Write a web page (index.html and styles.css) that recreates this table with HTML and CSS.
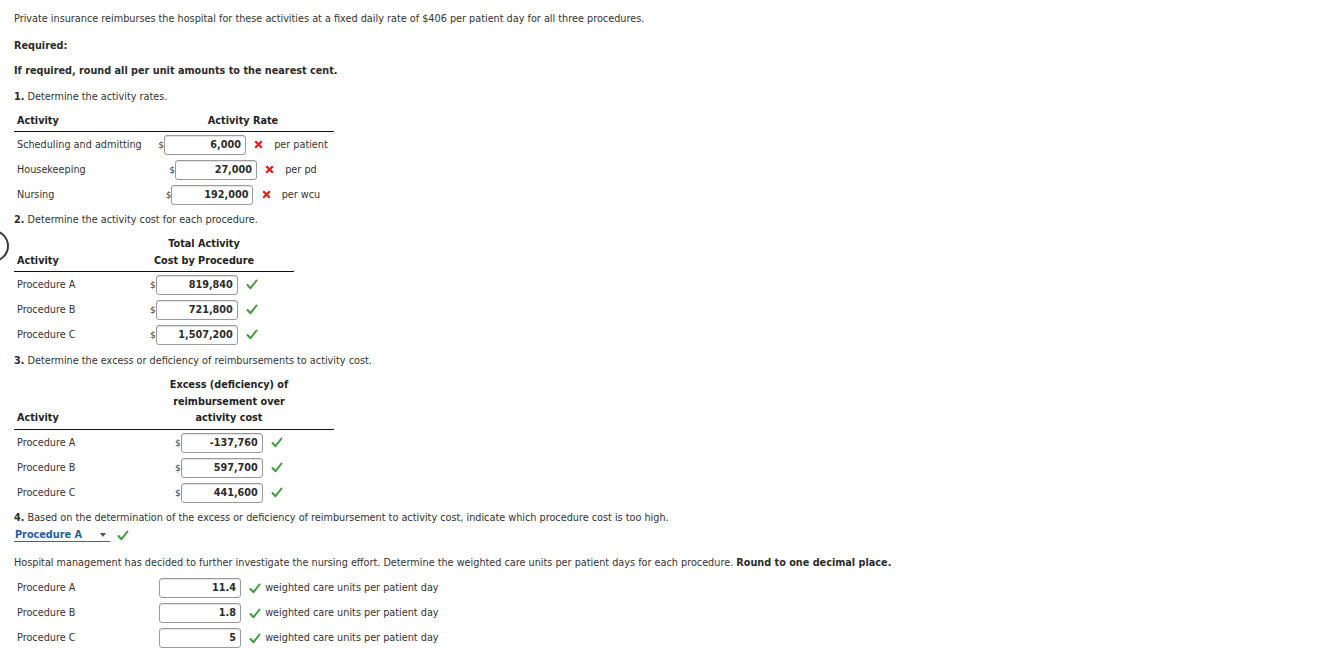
FILE: index.html
```html
<!doctype html>
<html lang="en">
<head>
  <meta charset="utf-8">
  <title>Activity-based costing</title>
  <link rel="stylesheet" href="styles.css">
</head>
<body>
<div class="sideRing"></div>

<div class="question">
  <p class="intro">Private insurance reimburses the hospital for these activities at a fixed daily rate of $406 per patient day for all three procedures.</p>
  <p class="required"><b>Required:</b></p>
  <p class="rounding"><b>If required, round all per unit amounts to the nearest cent.</b></p>

  <p class="step step--first"><b>1.</b> Determine the activity rates.</p>
  <table class="answerTable answerTable--rates">
    <thead>
      <tr>
        <th class="answerTable__label">Activity</th>
        <th class="answerTable__head">Activity Rate</th>
      </tr>
    </thead>
    <tbody>
      <tr>
        <td>Scheduling and admitting</td>
        <td class="answerTable__cell">
          <span class="field"><span class="field__sign">$</span><span class="field__box">6,000</span></span>
          <svg class="mark mark--wrong" viewBox="0 0 9 9"><path d="M1.2 1.2 L7.8 7.8 M7.8 1.2 L1.2 7.8"/></svg>
          <span class="unit">per patient</span>
        </td>
      </tr>
      <tr>
        <td>Housekeeping</td>
        <td class="answerTable__cell">
          <span class="field"><span class="field__sign">$</span><span class="field__box">27,000</span></span>
          <svg class="mark mark--wrong" viewBox="0 0 9 9"><path d="M1.2 1.2 L7.8 7.8 M7.8 1.2 L1.2 7.8"/></svg>
          <span class="unit">per pd</span>
        </td>
      </tr>
      <tr>
        <td>Nursing</td>
        <td class="answerTable__cell">
          <span class="field"><span class="field__sign">$</span><span class="field__box">192,000</span></span>
          <svg class="mark mark--wrong" viewBox="0 0 9 9"><path d="M1.2 1.2 L7.8 7.8 M7.8 1.2 L1.2 7.8"/></svg>
          <span class="unit">per wcu</span>
        </td>
      </tr>
    </tbody>
  </table>

  <p class="step step--second"><b>2.</b> Determine the activity cost for each procedure.</p>
  <table class="answerTable answerTable--cost">
    <thead>
      <tr>
        <th class="answerTable__label">Activity</th>
        <th class="answerTable__head">Total Activity<br>Cost by Procedure</th>
      </tr>
    </thead>
    <tbody>
      <tr>
        <td>Procedure A</td>
        <td class="answerTable__cell">
          <span class="field"><span class="field__sign">$</span><span class="field__box">819,840</span></span>
          <svg class="mark mark--right" viewBox="0 0 12 11"><path d="M1.5 6 L4.5 9.2 L10.5 1.5"/></svg>
        </td>
      </tr>
      <tr>
        <td>Procedure B</td>
        <td class="answerTable__cell">
          <span class="field"><span class="field__sign">$</span><span class="field__box">721,800</span></span>
          <svg class="mark mark--right" viewBox="0 0 12 11"><path d="M1.5 6 L4.5 9.2 L10.5 1.5"/></svg>
        </td>
      </tr>
      <tr>
        <td>Procedure C</td>
        <td class="answerTable__cell">
          <span class="field"><span class="field__sign">$</span><span class="field__box">1,507,200</span></span>
          <svg class="mark mark--right" viewBox="0 0 12 11"><path d="M1.5 6 L4.5 9.2 L10.5 1.5"/></svg>
        </td>
      </tr>
    </tbody>
  </table>

  <p class="step step--third"><b>3.</b> Determine the excess or deficiency of reimbursements to activity cost.</p>
  <table class="answerTable answerTable--excess">
    <thead>
      <tr>
        <th class="answerTable__label">Activity</th>
        <th class="answerTable__head">Excess (deficiency) of<br>reimbursement over<br>activity cost</th>
      </tr>
    </thead>
    <tbody>
      <tr>
        <td>Procedure A</td>
        <td class="answerTable__cell">
          <span class="field"><span class="field__sign">$</span><span class="field__box">-137,760</span></span>
          <svg class="mark mark--right" viewBox="0 0 12 11"><path d="M1.5 6 L4.5 9.2 L10.5 1.5"/></svg>
        </td>
      </tr>
      <tr>
        <td>Procedure B</td>
        <td class="answerTable__cell">
          <span class="field"><span class="field__sign">$</span><span class="field__box">597,700</span></span>
          <svg class="mark mark--right" viewBox="0 0 12 11"><path d="M1.5 6 L4.5 9.2 L10.5 1.5"/></svg>
        </td>
      </tr>
      <tr>
        <td>Procedure C</td>
        <td class="answerTable__cell">
          <span class="field"><span class="field__sign">$</span><span class="field__box">441,600</span></span>
          <svg class="mark mark--right" viewBox="0 0 12 11"><path d="M1.5 6 L4.5 9.2 L10.5 1.5"/></svg>
        </td>
      </tr>
    </tbody>
  </table>

  <p class="step step--fourth"><b>4.</b> Based on the determination of the excess or deficiency of reimbursement to activity cost, indicate which procedure cost is too high.</p>
  <div class="choice">
    <span class="choice__select">Procedure A<span class="choice__arrow"></span></span>
    <svg class="mark mark--right" viewBox="0 0 12 11"><path d="M1.5 6 L4.5 9.2 L10.5 1.5"/></svg>
  </div>

  <p class="nursing">Hospital management has decided to further investigate the nursing effort. Determine the weighted care units per patient days for each procedure. <b>Round to one decimal place.</b></p>
  <table class="answerTable answerTable--units">
    <tbody>
      <tr>
        <td class="answerTable__label">Procedure A</td>
        <td class="answerTable__cell answerTable__cell--left">
          <span class="field__box">11.4</span>
          <svg class="mark mark--right" viewBox="0 0 12 11"><path d="M1.5 6 L4.5 9.2 L10.5 1.5"/></svg>
          <span class="unit">weighted care units per patient day</span>
        </td>
      </tr>
      <tr>
        <td class="answerTable__label">Procedure B</td>
        <td class="answerTable__cell answerTable__cell--left">
          <span class="field__box">1.8</span>
          <svg class="mark mark--right" viewBox="0 0 12 11"><path d="M1.5 6 L4.5 9.2 L10.5 1.5"/></svg>
          <span class="unit">weighted care units per patient day</span>
        </td>
      </tr>
      <tr>
        <td class="answerTable__label">Procedure C</td>
        <td class="answerTable__cell answerTable__cell--left">
          <span class="field__box">5</span>
          <svg class="mark mark--right" viewBox="0 0 12 11"><path d="M1.5 6 L4.5 9.2 L10.5 1.5"/></svg>
          <span class="unit">weighted care units per patient day</span>
        </td>
      </tr>
    </tbody>
  </table>
</div>
</body>
</html>
```

FILE: styles.css
```css
body {
  margin: 0;
  padding: 11px 14px 0;
  font-family: "DejaVu Sans", Verdana, sans-serif;
  font-size: 9.7px;
  color: #333333;
  background-color: #ffffff;
  overflow: hidden;
}

b {
  color: #2b2b2b;
}

p {
  margin: 0;
  line-height: 16px;
}

.required {
  margin-top: 11px;
}

.rounding {
  margin-top: 9px;
}

.step {
  margin-top: 4px;
}

.step--first {
  margin-top: 10px;
}

.step--second {
  margin-top: 5px;
}

.step--third {
  margin-top: 6px;
}

.step--fourth {
  margin-top: 5px;
}

.nursing {
  margin-top: 12px;
}

/* partially visible ring on the left edge */
.sideRing {
  position: absolute;
  left: -23px;
  top: 230px;
  width: 28px;
  height: 28px;
  border: 2px solid #3a3a3a;
  border-radius: 50%;
}

.answerTable {
  border-collapse: collapse;
  table-layout: fixed;
  margin-top: 8px;
}

.answerTable th {
  font-weight: bold;
  color: #222222;
  padding: 0 0 2px;
  border-bottom: 1px solid #111111;
  vertical-align: bottom;
  line-height: 16px;
}

.answerTable td {
  padding: 0;
  height: 25px;
  line-height: 16px;
  vertical-align: middle;
}

.answerTable th.answerTable__label,
.answerTable td:first-child {
  text-align: left;
  padding-left: 3px;
}

.answerTable__head {
  text-align: center;
}

.answerTable__cell {
  text-align: center;
  white-space: nowrap;
}

.answerTable__cell--left {
  text-align: left;
}

.answerTable--rates .answerTable__label {
  width: 135px;
}

.answerTable--rates .answerTable__head {
  width: 182px;
}

.answerTable--cost {
  margin-top: 7px;
}

.answerTable--cost th {
  line-height: 17px;
  padding-bottom: 2px;
}

.answerTable--cost .answerTable__label {
  width: 97px;
}

.answerTable--cost .answerTable__head {
  width: 180px;
}

.answerTable--excess {
  margin-top: 8px;
}

.answerTable--excess th {
  line-height: 16.5px;
  padding-bottom: 2.5px;
}

.answerTable--excess .answerTable__label {
  width: 107px;
}

.answerTable--excess .answerTable__head {
  width: 210px;
}

.answerTable--units {
  margin-top: 4.5px;
}

.answerTable--units .answerTable__label {
  width: 142px;
}

.field {
  display: inline-flex;
  align-items: center;
  vertical-align: middle;
}

.field__sign {
  font-size: 9px;
  color: #333333;
}

.field__box {
  display: inline-block;
  vertical-align: middle;
  box-sizing: border-box;
  width: 82px;
  height: 20px;
  line-height: 18px;
  padding-right: 4px;
  text-align: right;
  font-weight: bold;
  color: #2b2b2b;
  border: 1px solid #9a9a9a;
  border-radius: 3px;
  box-shadow: inset 0 1px 1px rgba(0, 0, 0, 0.12);
  background-color: #ffffff;
}

.mark {
  display: inline-block;
  vertical-align: middle;
  fill: none;
}

.mark--wrong {
  width: 9px;
  height: 9px;
  margin: 0 7px 0 5px;
  stroke: #e3201b;
  stroke-width: 2.3;
}

.mark--right {
  width: 12px;
  height: 11px;
  margin-left: 5px;
  stroke: #3f9d3f;
  stroke-width: 2;
  stroke-linecap: round;
  stroke-linejoin: round;
}

.unit {
  vertical-align: middle;
  margin-left: 1px;
}

.choice {
  margin-top: 1px;
  height: 16px;
  display: flex;
  align-items: center;
}

.choice__select {
  position: relative;
  box-sizing: border-box;
  width: 96px;
  height: 14px;
  line-height: 13px;
  padding-left: 1px;
  font-weight: bold;
  color: #1d5f9e;
  border-bottom: 1px solid #2a6aa8;
}

.choice__arrow {
  position: absolute;
  right: 4px;
  top: 5px;
  border-left: 3px solid transparent;
  border-right: 3px solid transparent;
  border-top: 4px solid #555555;
}

.choice .mark--right {
  margin-left: 7px;
}
```
